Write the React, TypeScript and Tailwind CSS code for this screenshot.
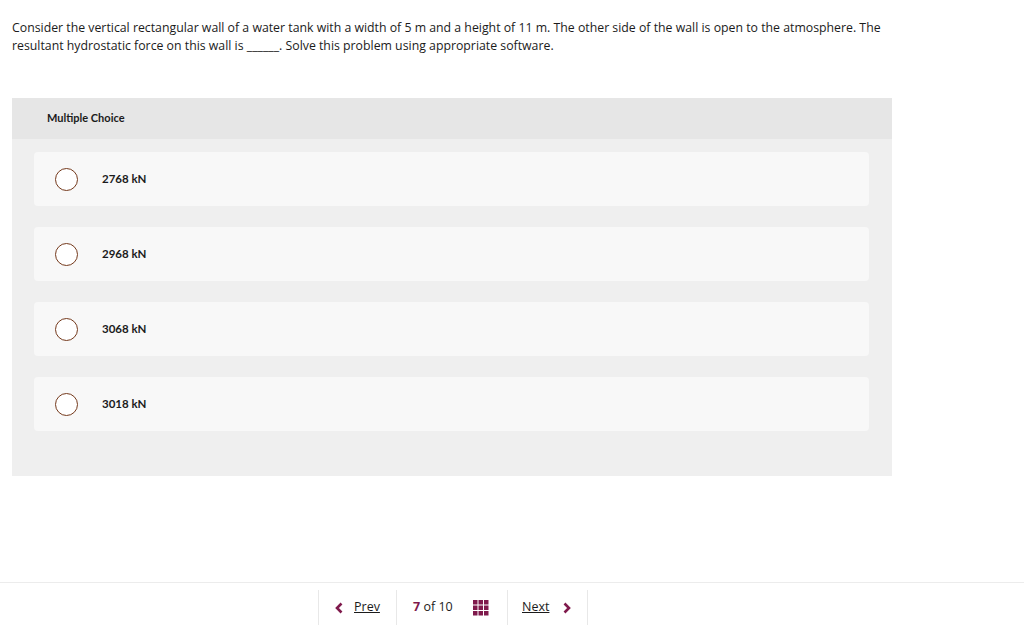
import React from "react";

const options = ["2768 kN", "2968 kN", "3068 kN", "3018 kN"];

function Radio() {
  return <span className="block h-[23px] w-[23px] rounded-full border-[1.5px] border-[#74391c] bg-white" />;
}

function GridIcon() {
  return (
    <svg width="16" height="16" viewBox="0 0 16 16" className="block">
      {[0, 1, 2].map((r) =>
        [0, 1, 2].map((c) => (
          <rect key={`${r}-${c}`} x={c * 5.5} y={r * 5.5} width="4.5" height="4.5" fill="#7f1a4c" />
        ))
      )}
    </svg>
  );
}

function Chevron({ dir }: { dir: "left" | "right" }) {
  return (
    <svg width="8" height="12" viewBox="0 0 8 12" className="block">
      <path
        d={dir === "left" ? "M6.5 1.5 L2 6 L6.5 10.5" : "M1.5 1.5 L6 6 L1.5 10.5"}
        fill="none"
        stroke="#7f1a4c"
        strokeWidth="2.6"
      />
    </svg>
  );
}

export default function App() {
  return (
    <div className="flex h-[631px] w-[1024px] flex-col bg-white font-['Lato','Liberation_Sans',sans-serif] text-[#1b1b1b]">
      <p className="ml-3 mt-[19px] w-[885px] font-['Open_Sans','Liberation_Sans',sans-serif] text-[12.3px] leading-[18px]">
        Consider the vertical rectangular wall of a water tank with a width of 5 m and a height of 11 m. The other side
        of the wall is open to the atmosphere. The resultant hydrostatic force on this wall is ______. Solve this
        problem using appropriate software.
      </p>

      <div className="ml-3 mt-[43px] w-[880px] bg-[#efefef] pb-[45px]">
        <div className="flex h-[41px] items-center bg-[#e6e6e6] pl-[35px] text-[11px] font-bold">Multiple Choice</div>
        <div className="mt-[13px] flex flex-col gap-[21px] px-[22px]">
          {options.map((o) => (
            <div key={o} className="flex h-[54px] w-[835px] items-center rounded-sm bg-[#f8f8f8] pl-[21px]">
              <Radio />
              <span className="ml-[24px] text-[11.5px] font-bold">{o}</span>
            </div>
          ))}
        </div>
      </div>

      <div className="mt-auto flex h-[49px] border-t border-[#ececec] pl-[318px] pt-[7px]">
        <div className="flex h-[35px] font-['Open_Sans','Liberation_Sans',sans-serif] text-[12.5px]">
          <div className="flex w-[79px] items-center gap-[11px] border-x border-[#e8e8e8] pl-[16px]">
            <Chevron dir="left" />
            <span className="underline">Prev</span>
          </div>
          <div className="flex w-[111px] items-center gap-[20px] border-r border-[#e8e8e8] pl-[16px]">
            <span>
              <b className="text-[#7f1a4c]">7</b> of 10
            </span>
            <GridIcon />
          </div>
          <div className="flex w-[80px] items-center gap-[14px] border-r border-[#e8e8e8] pl-[14px]">
            <span className="underline">Next</span>
            <Chevron dir="right" />
          </div>
        </div>
      </div>
    </div>
  );
}
